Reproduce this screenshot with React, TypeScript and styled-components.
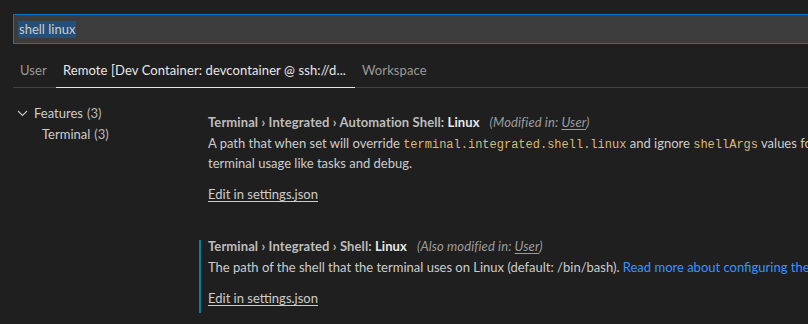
import React from "react";
import styled, { createGlobalStyle } from "styled-components";

const GlobalStyle = createGlobalStyle`
  html, body {
    margin: 0;
    padding: 0;
    background: #1f1f1f;
    overflow: hidden;
  }
  body {
    font-family: "Lato", "Noto Sans", sans-serif;
    font-size: 13px;
    color: #cccccc;
  }
`;

const Page = styled.div`
  width: 1100px;
  height: 324px;
  background: #1f1f1f;
`;

const SearchBox = styled.div`
  margin: 14px 0 0 13px;
  height: 28px;
  border: 1px solid #0078d4;
  background: #3c3c3c;
  display: flex;
  align-items: center;
  padding-left: 4px;
`;

const Selected = styled.span`
  background: #264f78;
  color: #cccccc;
  font-size: 13px;
  line-height: 17px;
  padding: 0 1px;
`;

const TabBar = styled.div`
  margin: 13px 0 0 13px;
  display: flex;
  border-bottom: 1px solid #414141;
`;

const Tab = styled.div<{ $active?: boolean }>`
  padding: 0 9px 0 7px;
  height: 30px;
  line-height: 26px;
  letter-spacing: 0.1px;
  color: ${(p) => (p.$active ? "#e7e7e7" : "#999999")};
  margin-bottom: -1px;
  border-bottom: 1px solid ${(p) => (p.$active ? "#e7e7e7" : "transparent")};
  white-space: nowrap;
`;

const Body = styled.div`
  display: flex;
`;

const Tree = styled.div`
  width: 199px;
  flex-shrink: 0;
  padding-top: 14px;
`;

const TreeRow = styled.div<{ $depth: number }>`
  display: flex;
  align-items: center;
  height: 21px;
  padding-left: ${(p) => (p.$depth === 0 ? 14 : 42)}px;
  color: #cccccc;
  white-space: nowrap;
`;

const Chevron = styled.svg`
  width: 16px;
  height: 16px;
  margin-right: 4px;
  flex-shrink: 0;
`;

const Count = styled.span`
  color: #b8b8b8;
  margin-left: 4px;
`;

const List = styled.div`
  padding-top: 28px;
  display: flex;
  flex-direction: column;
  gap: 31px;
`;

const Item = styled.div<{ $modified?: boolean }>`
  border-left: 2px solid ${(p) => (p.$modified ? "#0c7d9d" : "transparent")};
  padding: 0 0 6px 7px;
  white-space: nowrap;
`;

const Title = styled.div`
  margin-top: -3px;
  line-height: 18px;
  font-weight: 700;
  color: #bdbdbd;
  letter-spacing: 0.1px;
`;

const Key = styled.span`
  color: #e7e7e7;
`;

const Note = styled.span`
  font-weight: 400;
  font-style: italic;
  color: #9d9d9d;
  margin-left: 10px;

  & u {
    text-underline-offset: 2px;
  }
`;

const Desc = styled.div`
  margin-top: 3px;
  line-height: 18px;
  color: #cccccc;
`;

const Code = styled.code`
  font-family: "Liberation Mono", "DejaVu Sans Mono", monospace;
  font-size: 12px;
  color: #d7ba7d;
`;

const Link = styled.a`
  color: #3794ff;
  text-decoration: none;
`;

const Edit = styled.div`
  margin-top: 13px;
  line-height: 18px;
  color: #cccccc;
  text-decoration: underline;
  text-underline-offset: 2px;
`;

const App = () => {
  return (
    <Page>
      <GlobalStyle />
      <SearchBox>
        <Selected>shell linux</Selected>
      </SearchBox>
      <TabBar>
        <Tab>User</Tab>
        <Tab $active>Remote [Dev Container: devcontainer @ ssh://d...</Tab>
        <Tab>Workspace</Tab>
      </TabBar>
      <Body>
        <Tree>
          <TreeRow $depth={0}>
            <Chevron viewBox="0 0 16 16">
              <path d="M4 6l4.5 4.5L13 6" fill="none" stroke="#c5c5c5" strokeWidth="1.1" />
            </Chevron>
            Features<Count>(3)</Count>
          </TreeRow>
          <TreeRow $depth={1}>
            Terminal<Count>(3)</Count>
          </TreeRow>
        </Tree>
        <List>
          <Item>
            <Title>
              Terminal › Integrated › Automation Shell: <Key>Linux</Key>
              <Note>
                (Modified in: <u>User</u>)
              </Note>
            </Title>
            <Desc>
              A path that when set will override <Code>terminal.integrated.shell.linux</Code> and
              ignore <Code>shellArgs</Code> values for automation-related
              <br />
              terminal usage like tasks and debug.
            </Desc>
            <Edit>Edit in settings.json</Edit>
          </Item>
          <Item $modified>
            <Title>
              Terminal › Integrated › Shell: <Key>Linux</Key>
              <Note>
                (Also modified in: <u>User</u>)
              </Note>
            </Title>
            <Desc>
              The path of the shell that the terminal uses on Linux (default: /bin/bash).{" "}
              <Link>Read more about configuring the shell.</Link>
            </Desc>
            <Edit>Edit in settings.json</Edit>
          </Item>
        </List>
      </Body>
    </Page>
  );
};

export default App;
